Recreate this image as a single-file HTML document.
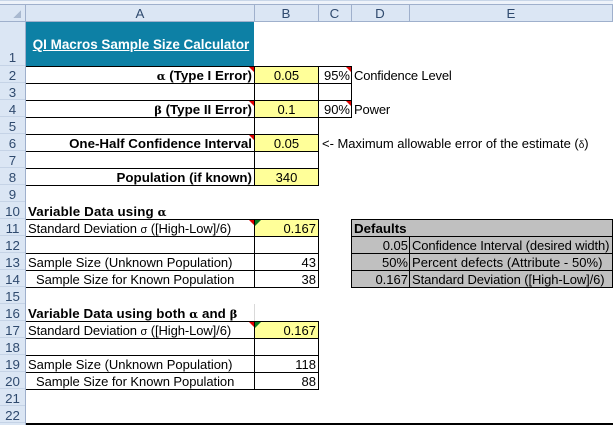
<!DOCTYPE html>
<html>
<head>
<meta charset="utf-8">
<style>
html,body{margin:0;padding:0;background:#fff}
#p{position:relative;width:613px;height:425px;overflow:hidden;background:#fff;font-family:"Liberation Sans",Arial,sans-serif;font-size:13px;color:#000}
svg{position:absolute;left:0;top:0}
.t{position:absolute;height:16px;line-height:16px;white-space:nowrap;margin-top:1px}
.r{text-align:right}
.c{text-align:center}
.b{font-weight:bold;font-size:13.33px}
.h{color:#2f4a6e;text-align:center;font-size:13.33px}
.g{font-family:"DejaVu Serif","Liberation Serif",serif;font-size:11.5px}
</style>
</head>
<body>
<div id="p">
<svg width="613" height="425" shape-rendering="crispEdges">
<rect x="0" y="0" width="613" height="1" fill="#c8d6e8"/>
<rect x="0" y="1" width="613" height="3" fill="#eef3fa"/>
<rect x="0" y="4" width="613" height="1" fill="#9fb0cc"/>
<rect x="0" y="5" width="613" height="17" fill="#dbe6f4"/>
<rect x="0" y="22" width="26" height="403" fill="#dbe6f4"/>
<rect x="0" y="21" width="613" height="1" fill="#9fb0cc"/>
<rect x="25" y="5" width="1" height="420" fill="#9fb0cc"/>
<rect x="254" y="5" width="1" height="16" fill="#9fb0cc"/>
<rect x="318" y="5" width="1" height="16" fill="#9fb0cc"/>
<rect x="351" y="5" width="1" height="16" fill="#9fb0cc"/>
<rect x="409" y="5" width="1" height="16" fill="#9fb0cc"/>
<rect x="612" y="5" width="1" height="17" fill="#9fb0cc"/>
<polygon points="13,18 21,18 21,10" fill="#a9b9d0"/>
<g fill="#c5d3e6">
<rect x="0" y="65" width="25" height="1"/><rect x="0" y="82" width="25" height="1"/><rect x="0" y="99" width="25" height="1"/><rect x="0" y="116" width="25" height="1"/><rect x="0" y="133" width="25" height="1"/><rect x="0" y="150" width="25" height="1"/><rect x="0" y="167" width="25" height="1"/><rect x="0" y="184" width="25" height="1"/><rect x="0" y="201" width="25" height="1"/><rect x="0" y="218" width="25" height="1"/><rect x="0" y="235" width="25" height="1"/><rect x="0" y="252" width="25" height="1"/><rect x="0" y="269" width="25" height="1"/><rect x="0" y="286" width="25" height="1"/><rect x="0" y="303" width="25" height="1"/><rect x="0" y="320" width="25" height="1"/><rect x="0" y="337" width="25" height="1"/><rect x="0" y="354" width="25" height="1"/><rect x="0" y="371" width="25" height="1"/><rect x="0" y="388" width="25" height="1"/><rect x="0" y="405" width="25" height="1"/><rect x="0" y="422" width="25" height="1"/>
</g>
<rect x="26" y="22" width="228" height="44" fill="#0d80a5"/>
<g fill="#ffff99">
<rect x="255" y="67" width="63" height="16"/>
<rect x="255" y="101" width="63" height="16"/>
<rect x="255" y="135" width="63" height="16"/>
<rect x="255" y="169" width="63" height="16"/>
<rect x="255" y="220" width="63" height="16"/>
<rect x="255" y="322" width="63" height="16"/>
</g>
<rect x="351" y="219" width="262" height="68" fill="#c0c0c0"/>
<rect x="254" y="304" width="1" height="17" fill="#d9d9d9"/>
<g fill="#000">
<rect x="26" y="66" width="326" height="1"/>
<rect x="26" y="83" width="326" height="1"/>
<rect x="26" y="100" width="326" height="1"/>
<rect x="26" y="117" width="326" height="1"/>
<rect x="26" y="134" width="293" height="1"/>
<rect x="26" y="151" width="293" height="1"/>
<rect x="26" y="168" width="293" height="1"/>
<rect x="26" y="185" width="293" height="1"/>
<rect x="254" y="66" width="1" height="120"/>
<rect x="318" y="66" width="1" height="120"/>
<rect x="351" y="66" width="1" height="52"/>
<rect x="26" y="219" width="293" height="1"/>
<rect x="26" y="236" width="293" height="1"/>
<rect x="26" y="253" width="293" height="1"/>
<rect x="26" y="270" width="293" height="1"/>
<rect x="26" y="287" width="293" height="1"/>
<rect x="254" y="219" width="1" height="69"/>
<rect x="318" y="219" width="1" height="69"/>
<rect x="26" y="321" width="293" height="1"/>
<rect x="26" y="338" width="293" height="1"/>
<rect x="26" y="355" width="293" height="1"/>
<rect x="26" y="372" width="293" height="1"/>
<rect x="26" y="389" width="293" height="1"/>
<rect x="254" y="321" width="1" height="69"/>
<rect x="318" y="321" width="1" height="69"/>
<rect x="351" y="219" width="262" height="1"/>
<rect x="351" y="236" width="262" height="1"/>
<rect x="351" y="253" width="262" height="1"/>
<rect x="351" y="270" width="262" height="1"/>
<rect x="351" y="287" width="262" height="1"/>
<rect x="351" y="219" width="1" height="69"/>
<rect x="612" y="219" width="1" height="69"/>
<rect x="409" y="236" width="1" height="52"/>
<rect x="26" y="423" width="587" height="2"/>
</g>
<g fill="#e00000" shape-rendering="auto">
<polygon points="249,67 254,67 254,72"/>
<polygon points="249,101 254,101 254,106"/>
<polygon points="249,135 254,135 254,140"/>
<polygon points="346,67 351,67 351,72"/>
<polygon points="346,101 351,101 351,106"/>
<polygon points="249,220 254,220 254,225"/>
<polygon points="249,322 254,322 254,327"/>
</g>
<g fill="#0a7a1e" shape-rendering="auto">
<polygon points="255,220 261,220 255,226"/>
<polygon points="255,322 261,322 255,328"/>
</g>
</svg>

<div class="t h" style="left:26px;width:228px;top:5px">A</div>
<div class="t h" style="left:254px;width:64px;top:5px">B</div>
<div class="t h" style="left:318px;width:33px;top:5px">C</div>
<div class="t h" style="left:351px;width:58px;top:5px">D</div>
<div class="t h" style="left:409px;width:204px;top:5px">E</div>

<div class="t h" style="left:0;width:25px;top:49px">1</div>
<div class="t h" style="left:0;width:25px;top:67px">2</div>
<div class="t h" style="left:0;width:25px;top:84px">3</div>
<div class="t h" style="left:0;width:25px;top:101px">4</div>
<div class="t h" style="left:0;width:25px;top:118px">5</div>
<div class="t h" style="left:0;width:25px;top:135px">6</div>
<div class="t h" style="left:0;width:25px;top:152px">7</div>
<div class="t h" style="left:0;width:25px;top:169px">8</div>
<div class="t h" style="left:0;width:25px;top:186px">9</div>
<div class="t h" style="left:0;width:25px;top:203px">10</div>
<div class="t h" style="left:0;width:25px;top:220px">11</div>
<div class="t h" style="left:0;width:25px;top:237px">12</div>
<div class="t h" style="left:0;width:25px;top:254px">13</div>
<div class="t h" style="left:0;width:25px;top:271px">14</div>
<div class="t h" style="left:0;width:25px;top:288px">15</div>
<div class="t h" style="left:0;width:25px;top:305px">16</div>
<div class="t h" style="left:0;width:25px;top:322px">17</div>
<div class="t h" style="left:0;width:25px;top:339px">18</div>
<div class="t h" style="left:0;width:25px;top:356px">19</div>
<div class="t h" style="left:0;width:25px;top:373px">20</div>
<div class="t h" style="left:0;width:25px;top:390px">21</div>
<div class="t h" style="left:0;width:25px;top:407px">22</div>

<div class="t b c" style="left:27px;width:228px;top:36px;color:#fff;text-decoration:underline;font-size:13.45px">QI Macros Sample Size Calculator</div>

<div class="t b r" style="left:26px;width:226px;top:67px"><span class="g">α</span> (Type I Error)</div>
<div class="t b r" style="left:26px;width:226px;top:101px"><span class="g">β</span> (Type II Error)</div>
<div class="t b r" style="left:26px;width:226px;top:135px">One-Half Confidence Interval</div>
<div class="t b r" style="left:26px;width:226px;top:169px">Population (if known)</div>

<div class="t c" style="left:255px;width:63px;top:67px">0.05</div>
<div class="t c" style="left:255px;width:63px;top:101px">0.1</div>
<div class="t c" style="left:255px;width:63px;top:135px">0.05</div>
<div class="t c" style="left:255px;width:63px;top:169px">340</div>

<div class="t r" style="left:319px;width:31px;top:67px">95%</div>
<div class="t r" style="left:319px;width:31px;top:101px">90%</div>
<div class="t" style="left:354px;top:67px;letter-spacing:-.18px">Confidence Level</div>
<div class="t" style="left:354px;top:101px;letter-spacing:-.15px">Power</div>
<div class="t" style="left:322px;top:135px;letter-spacing:-.02px">&lt;- Maximum allowable error of the estimate (<span style="font-size:10px">δ</span>)</div>

<div class="t b" style="left:28px;top:203px;letter-spacing:.15px">Variable Data using <span class="g">α</span></div>
<div class="t" style="left:28px;top:220px;letter-spacing:-.09px">Standard Deviation <span style="font-size:11px">σ</span> ([High-Low]/6)</div>
<div class="t" style="left:28px;top:254px">Sample Size (Unknown Population)</div>
<div class="t" style="left:36px;top:271px;letter-spacing:-.06px">Sample Size for Known Population</div>
<div class="t r" style="left:255px;width:61px;top:220px">0.167</div>
<div class="t r" style="left:255px;width:61px;top:254px">43</div>
<div class="t r" style="left:255px;width:61px;top:271px">38</div>

<div class="t b" style="left:28px;top:305px;letter-spacing:.08px">Variable Data using both <span class="g">α</span> and <span class="g">β</span></div>
<div class="t" style="left:28px;top:322px;letter-spacing:-.09px">Standard Deviation <span style="font-size:11px">σ</span> ([High-Low]/6)</div>
<div class="t" style="left:28px;top:356px">Sample Size (Unknown Population)</div>
<div class="t" style="left:36px;top:373px;letter-spacing:-.06px">Sample Size for Known Population</div>
<div class="t r" style="left:255px;width:61px;top:322px">0.167</div>
<div class="t r" style="left:255px;width:61px;top:356px">118</div>
<div class="t r" style="left:255px;width:61px;top:373px">88</div>

<div class="t b" style="left:354px;top:220px">Defaults</div>
<div class="t r" style="left:352px;width:56px;top:237px">0.05</div>
<div class="t r" style="left:352px;width:56px;top:254px">50%</div>
<div class="t r" style="left:352px;width:56px;top:271px">0.167</div>
<div class="t" style="left:412px;top:237px;letter-spacing:-.1px">Confidence Interval (desired width)</div>
<div class="t" style="left:412px;top:254px;letter-spacing:.06px">Percent defects (Attribute - 50%)</div>
<div class="t" style="left:412px;top:271px;letter-spacing:-.1px">Standard Deviation ([High-Low]/6)</div>
</div>
</body>
</html>
